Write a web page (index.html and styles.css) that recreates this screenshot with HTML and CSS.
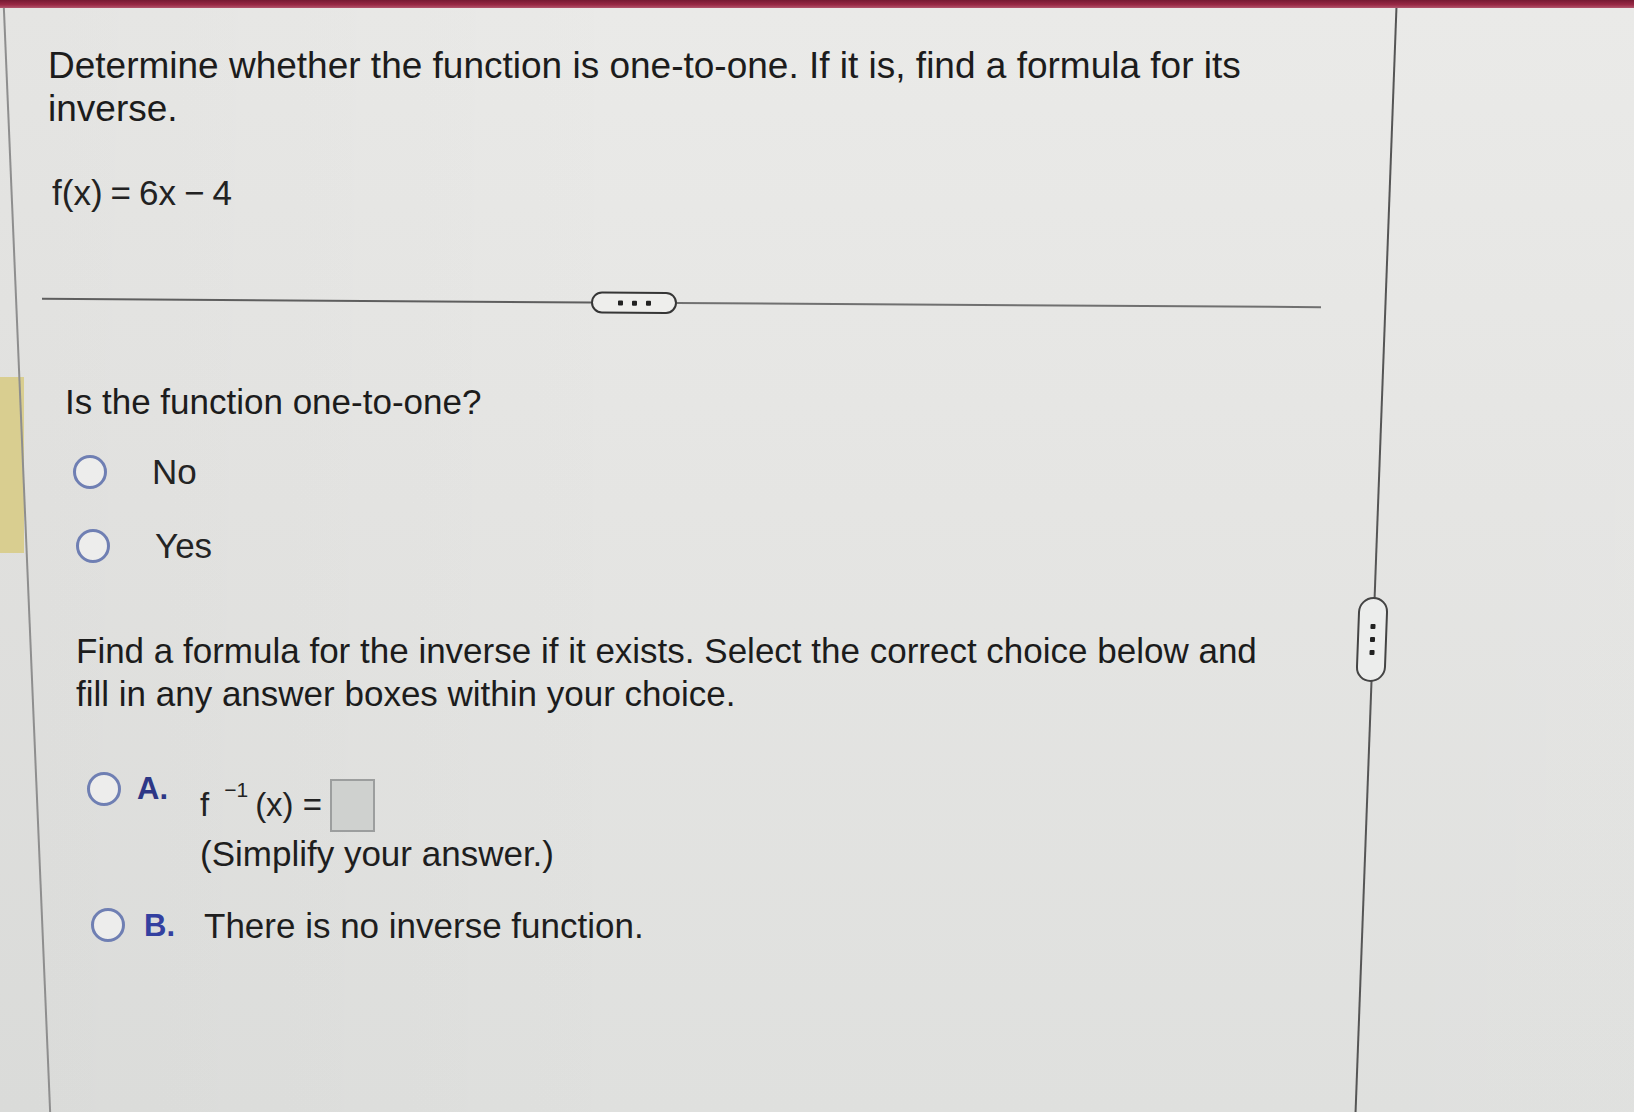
FILE: index.html
```html
<!DOCTYPE html>
<html lang="en">
<head>
<meta charset="utf-8">
<title>One-to-one function</title>
<link rel="stylesheet" href="styles.css">
</head>
<body>
<div class="screen">
  <div class="topbar"></div>
  <div class="frame">
    <div class="gutter"><div class="highlight"></div></div>
    <main class="content">
      <p class="prompt">Determine whether the function is one-to-one. If it is, find a formula for its<br>inverse.</p>
      <p class="fx">f(x)<span class="op">=</span>6x<span class="op">−</span>4</p>

      <div class="divider">
        <span class="rule rule-left"></span>
        <span class="pill"><i class="dot"></i><i class="dot"></i><i class="dot"></i></span>
        <span class="rule rule-right"></span>
      </div>

      <section class="part part-one">
        <p class="question">Is the function one-to-one?</p>
        <div class="choices">
          <label class="choice choice-no"><span class="radio"></span><span class="choice-text">No</span></label>
          <label class="choice choice-yes"><span class="radio"></span><span class="choice-text">Yes</span></label>
        </div>
      </section>

      <section class="part part-two">
        <p class="question">Find a formula for the inverse if it exists. Select the correct choice below and<br>fill in any answer boxes within your choice.</p>

        <div class="option option-a">
          <span class="radio"></span>
          <span class="opt-label">A.</span>
          <div class="opt-body">
            <div class="math"><span class="f">f</span><span class="sup">−1</span><span class="args">(x) =</span><span class="answer-box"></span></div>
            <div class="hint">(Simplify your answer.)</div>
          </div>
        </div>

        <div class="option option-b">
          <span class="radio"></span>
          <span class="opt-label">B.</span>
          <div class="opt-body">
            <div class="hint">There is no inverse function.</div>
          </div>
        </div>
      </section>

      <span class="vhandle"><i class="dot"></i><i class="dot"></i><i class="dot"></i></span>
    </main>
    <div class="side"></div>
  </div>
</div>
</body>
</html>
```

FILE: styles.css
```css
html, body {
  margin: 0;
  padding: 0;
}

body {
  font-family: "Liberation Sans", Arial, sans-serif;
  color: #1e1e1e;
  background: #e4e5e3;
}

p {
  margin: 0;
}

.screen {
  width: 1634px;
  height: 1112px;
  overflow: hidden;
  display: flex;
  flex-direction: column;
}

.topbar {
  flex: none;
  height: 8px;
  background: linear-gradient(180deg, #761a33 0%, #992945 60%, #b3566d 100%);
  box-shadow: 0 1px 0 #f1f1f0;
}

.frame {
  flex: 1;
  display: flex;
  background:
    linear-gradient(90deg, rgba(0, 0, 0, 0.025) 0%, rgba(0, 0, 0, 0) 40%, rgba(255, 255, 255, 0.02) 100%),
    linear-gradient(180deg, #eaeae8 0%, #e5e5e3 45%, #dfe0de 100%);
}

.gutter {
  flex: none;
  width: 27px;
}

.highlight {
  margin-top: 369px;
  width: 24px;
  height: 176px;
  background: #d9ce90;
}

.content {
  position: relative;
  flex: none;
  width: 1349px;
  padding-top: 35.5px;
  box-sizing: border-box;
}

.content::before,
.content::after {
  content: "";
  position: absolute;
  top: 0;
  bottom: 0;
  width: 2px;
}

.content::before {
  left: -1px;
  background: #8e8e8e;
  transform: skewX(2.4deg);
}

.content::after {
  right: -1px;
  background: #555;
  transform: skewX(-2.12deg);
}

.side {
  flex: 1;
}

/* header */
.prompt {
  padding-left: 21px;
  font-size: 37px;
  line-height: 43px;
  color: #1c1c1c;
}

.fx {
  margin-top: 41.5px;
  padding-left: 25px;
  font-size: 35px;
  line-height: 43px;
  color: #222;
}

.op {
  margin: 0 8px;
}

/* divider */
.divider {
  margin: 77.5px 55px 0 15px;
  height: 22px;
  display: flex;
  align-items: center;
  transform: rotate(0.37deg);
}

.rule {
  height: 2px;
  background: #5e5e5e;
}

.rule-left {
  width: 549px;
  flex: none;
}

.rule-right {
  flex: 1;
  background: #707070;
}

.pill {
  flex: none;
  width: 86px;
  height: 22px;
  box-sizing: border-box;
  border: 2.5px solid #363636;
  border-radius: 11px;
  background: #eeeeec;
  display: flex;
  align-items: center;
  justify-content: center;
  gap: 9px;
}

.dot {
  display: block;
  width: 5px;
  height: 5px;
  border-radius: 1px;
  background: #222;
}

/* parts */
.part-one {
  margin-top: 66.5px;
  padding-left: 38px;
}

.question {
  font-size: 35px;
  line-height: 43px;
  color: #1c1c1c;
}

.choices {
  margin-top: 27px;
  display: flex;
  flex-direction: column;
  gap: 31px;
}

.choice {
  display: flex;
  align-items: center;
  height: 43px;
  padding-left: 8px;
  gap: 45px;
  font-size: 35px;
  color: #242424;
}

.choice-yes {
  padding-left: 11px;
}

.radio {
  flex: none;
  display: block;
  width: 34px;
  height: 34px;
  box-sizing: border-box;
  border: 3px solid #6f7fb3;
  border-radius: 50%;
  background: #ededec;
}

.part-two {
  margin-top: 62px;
  padding-left: 49px;
}

.option {
  display: flex;
  align-items: flex-start;
}

.option-a {
  margin-top: 52px;
  padding-left: 11px;
}

.option-b {
  margin-top: 29px;
  padding-left: 15px;
}

.option .radio {
  margin-top: 4.5px;
}

.opt-label {
  flex: none;
  width: 63px;
  margin-left: 16px;
  font-size: 31px;
  line-height: 43px;
  font-weight: bold;
  color: #2d3786;
}

.option-b .opt-label {
  width: 60px;
  margin-left: 19px;
  color: #3340a0;
}

.opt-body {
  display: flex;
  flex-direction: column;
}

.math {
  margin-top: 11.5px;
  height: 53px;
  display: flex;
  align-items: center;
  font-size: 33px;
  color: #222;
}

.f {
  margin-right: 15px;
}

.sup {
  font-size: 21px;
  margin-right: 7px;
  transform: translateY(-15px);
}

.args {
  margin-right: 8px;
}

.answer-box {
  display: block;
  width: 45px;
  height: 53px;
  box-sizing: border-box;
  border: 2px solid #9c9e9e;
  background: #cfd1cf;
}

.hint {
  font-size: 35px;
  line-height: 43px;
  color: #1e1e1e;
}

/* vertical resize handle on the right edge */
.vhandle {
  position: absolute;
  right: -11px;
  top: 589px;
  z-index: 1;
  width: 30px;
  height: 85px;
  box-sizing: border-box;
  border: 2px solid #444;
  border-radius: 15px;
  background: #ecedec;
  display: flex;
  flex-direction: column;
  align-items: center;
  justify-content: center;
  gap: 8px;
  transform: skewX(-2.12deg);
}
```
